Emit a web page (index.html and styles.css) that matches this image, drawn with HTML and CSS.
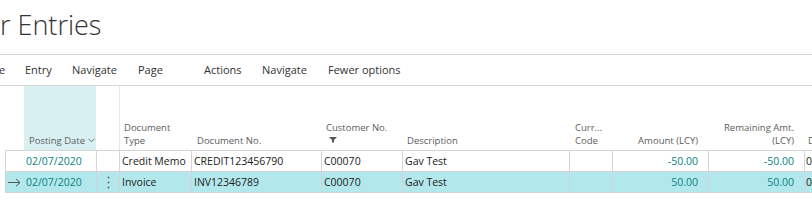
FILE: index.html
```html
<!DOCTYPE html>
<html lang="en">
<head>
<meta charset="utf-8">
<title>Customer Ledger Entries</title>
<link rel="stylesheet" href="styles.css">
</head>
<body>
<div class="page">
  <header class="title-bar">
    <h1 class="title">r Entries</h1>
  </header>
  <nav class="menu">
    <span class="menu-item">e</span>
    <span class="menu-item">Entry</span>
    <span class="menu-item">Navigate</span>
    <span class="menu-item">Page</span>
    <span class="menu-item">Actions</span>
    <span class="menu-item">Navigate</span>
    <span class="menu-item">Fewer options</span>
  </nav>
  <div class="grid">
    <div class="head">
      <div class="hcell h-date">
        <div class="sorted"><span>Posting Date</span><svg class="chev" width="7" height="5" viewBox="0 0 7 5"><polyline points="0.5,0.8 3.5,3.8 6.5,0.8" fill="none" stroke="#6a6a6a" stroke-width="1"/></svg></div>
      </div>
      <div class="hcell h-menu"></div>
      <div class="hcell"><span class="hl">Document</span><span class="hl">Type</span></div>
      <div class="hcell pad5"><span class="hl">Document No.</span></div>
      <div class="hcell"><span class="hl">Customer No.</span><span class="hl filter"><svg width="8" height="6" viewBox="0 0 8 6"><path d="M0 0 H8 L5 3 V5.5 H3 V3 Z" fill="#555"/></svg></span></div>
      <div class="hcell"><span class="hl">Description</span></div>
      <div class="hcell pad5"><span class="hl">Curr...</span><span class="hl">Code</span></div>
      <div class="hcell num"><span class="hl">Amount (LCY)</span></div>
      <div class="hcell num"><span class="hl">Remaining Amt.</span><span class="hl">(LCY)</span></div>
      <div class="hcell last"><span class="hl">D</span></div>
    </div>
    <div class="row">
      <div class="cell c-date"><span class="ind"></span><span class="link">02/07/2020</span></div>
      <div class="cell c-menu"></div>
      <div class="cell">Credit Memo</div>
      <div class="cell">CREDIT123456790</div>
      <div class="cell">C00070</div>
      <div class="cell">Gav Test</div>
      <div class="cell"></div>
      <div class="cell num link">-50.00</div>
      <div class="cell num link">-50.00</div>
      <div class="cell last">0</div>
    </div>
    <div class="row selected">
      <div class="cell c-date"><span class="ind"><svg width="13" height="9" viewBox="0 0 13 9"><path d="M0 4.5 H12 M8 0.8 L12 4.5 L8 8.2" fill="none" stroke="#555" stroke-width="1"/></svg></span><span class="link">02/07/2020</span></div>
      <div class="cell c-menu"><svg width="3" height="13" viewBox="0 0 3 13"><circle cx="1.5" cy="1.5" r="1" fill="#666"/><circle cx="1.5" cy="6.5" r="1" fill="#666"/><circle cx="1.5" cy="11.5" r="1" fill="#666"/></svg></div>
      <div class="cell">Invoice</div>
      <div class="cell">INV12346789</div>
      <div class="cell">C00070</div>
      <div class="cell">Gav Test</div>
      <div class="cell"></div>
      <div class="cell num link">50.00</div>
      <div class="cell num link">50.00</div>
      <div class="cell last">0</div>
    </div>
  </div>
</div>
</body>
</html>
```
FILE: styles.css
```css
html, body {
  margin: 0;
  padding: 0;
  background: #ffffff;
  overflow: hidden;
}
body {
  font-family: "Segoe UI", "Open Sans", "Noto Sans", sans-serif;
  color: #212121;
}
.page {
  width: 812px;
  height: 208px;
  overflow: hidden;
}
.title-bar {
  height: 55px;
  box-sizing: border-box;
  padding-top: 7px;
  border-bottom: 1px solid #d6d6d6;
}
.title {
  margin: 0;
  font-size: 27px;
  font-weight: 300;
  line-height: 36px;
  color: #333;
  white-space: nowrap;
}
.menu {
  display: grid;
  grid-template-columns: 25px 47px 66px 66px 58px 66px auto;
  height: 31px;
  box-sizing: border-box;
  border-bottom: 1px solid #d6d6d6;
  font-size: 11px;
  line-height: 30px;
  color: #333;
}
.menu-item {
  white-space: nowrap;
}
.menu-item:first-child {
  margin-left: -1px;
}
.grid {
  --cols: 91px 23px 72px 130px 81px 167px 43px 96px 96px 80px;
}
.head {
  display: grid;
  grid-template-columns: var(--cols);
  height: 65px;
  box-sizing: border-box;
  margin-left: 5px;
  border-left: 1px solid transparent;
  border-bottom: 1px solid #d3d3d8;
  font-size: 9.5px;
  line-height: 13px;
  color: #5c5c5c;
}
.hcell {
  display: flex;
  flex-direction: column;
  justify-content: flex-end;
  padding: 0 0 3px 4px;
  white-space: nowrap;
  overflow: hidden;
}
.hcell.pad5 {
  padding-left: 5px;
}
.hcell.h-date {
  padding: 0 1px 0 18px;
}
.sorted {
  flex: 1;
  display: flex;
  align-items: flex-end;
  padding: 0 0 3px 5px;
  background: #d9f0f3;
}
.chev {
  margin: 0 0 4px 3px;
}
.hcell.h-menu {
  border-right: 1px solid #e6e6e6;
}
.hcell.num {
  align-items: flex-end;
  padding-left: 0;
  padding-right: 11px;
}
.hcell.last {
  padding-left: 3px;
}
.hl {
  display: block;
  height: 13px;
}
.filter {
  display: flex;
  align-items: flex-start;
  padding: 3px 0 0 3px;
  box-sizing: border-box;
}
.row {
  display: grid;
  grid-template-columns: var(--cols);
  margin-left: 5px;
  border-left: 1px solid #d3d3d8;
  border-bottom: 1px solid #d3d3d8;
  font-size: 10.5px;
  line-height: 20px;
  height: 21px;
  box-sizing: border-box;
}
.row.selected {
  background: #b2e8eb;
}
.cell {
  border-right: 1px solid #d3d3d8;
  padding: 0 0 0 2px;
  white-space: nowrap;
  overflow: hidden;
}
.cell.c-date {
  display: flex;
  padding-left: 0;
}
.ind {
  width: 20px;
  display: flex;
  align-items: center;
  padding-left: 2px;
  box-sizing: border-box;
}
.cell.c-menu {
  display: flex;
  align-items: center;
  justify-content: center;
  padding: 0;
}
.cell.num {
  text-align: right;
  padding: 0 10px 0 0;
}
.cell.last {
  border-right: none;
  padding-left: 1px;
}
.link {
  color: #0a7f86;
}
```
